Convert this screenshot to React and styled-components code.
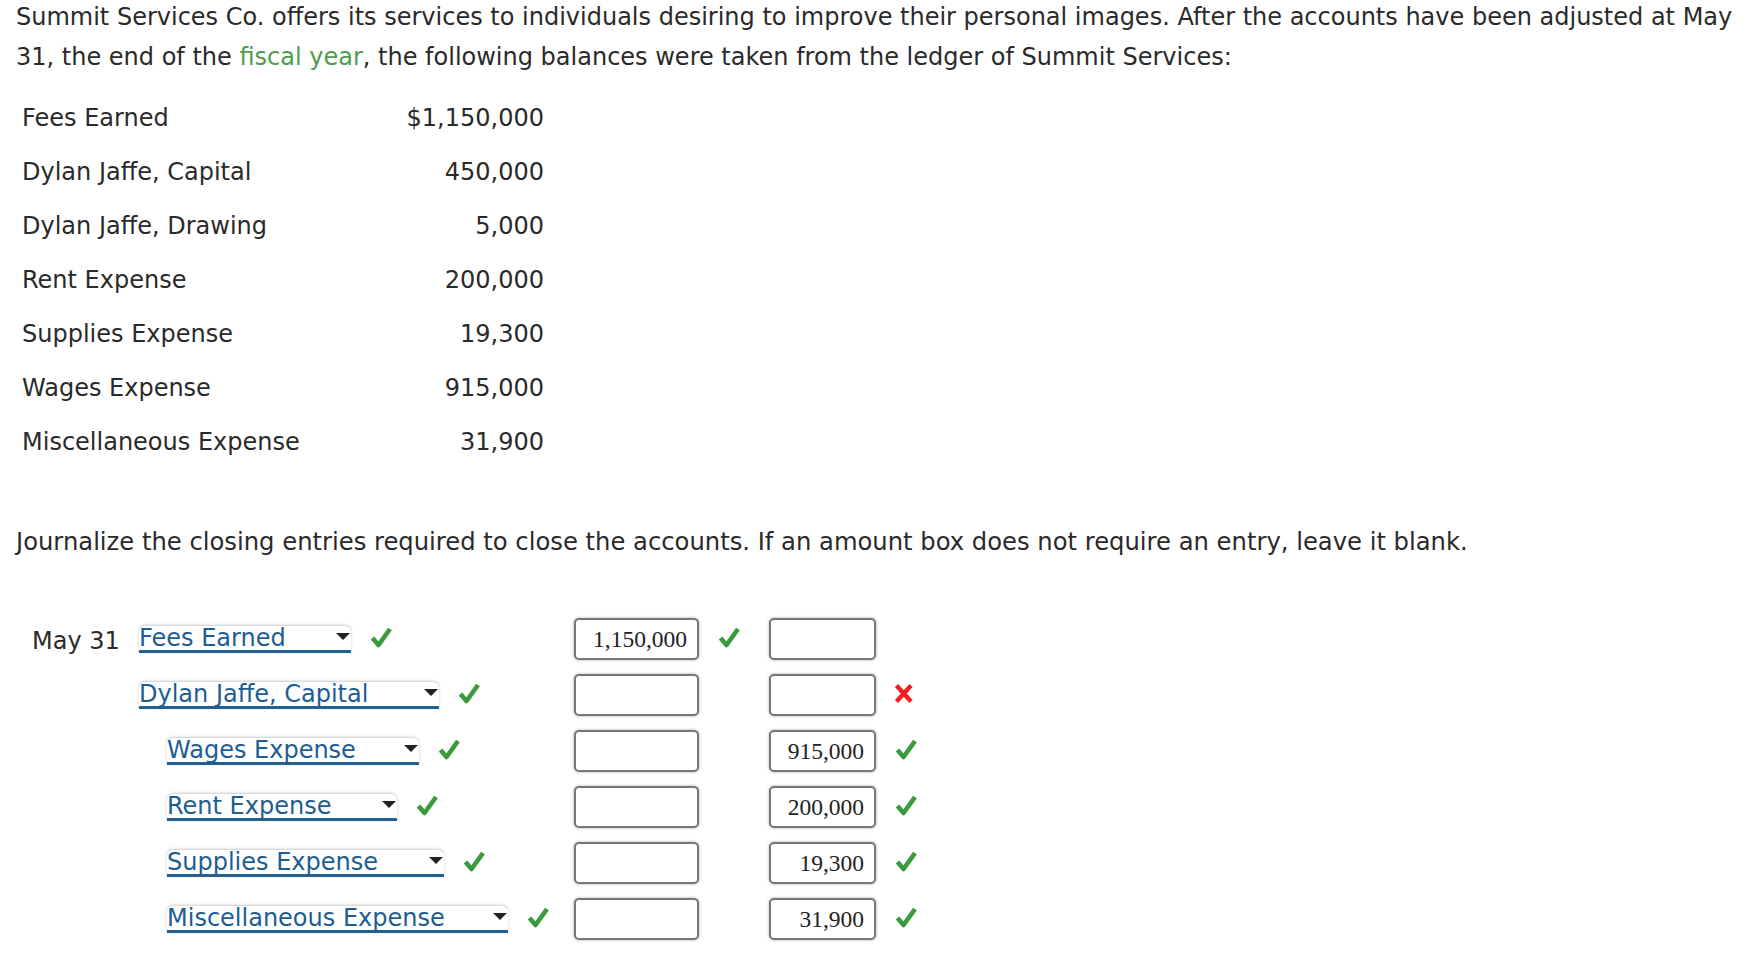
import React from "react";
import styled, { createGlobalStyle } from "styled-components";

const GlobalStyle = createGlobalStyle`
	body {
		margin: 0;
		background: #fff;
		color: #2a2a2a;
		font-family: "DejaVu Sans", Verdana, sans-serif;
	}
`;

const balances = [
	["Fees Earned", "$1,150,000"],
	["Dylan Jaffe, Capital", "450,000"],
	["Dylan Jaffe, Drawing", "5,000"],
	["Rent Expense", "200,000"],
	["Supplies Expense", "19,300"],
	["Wages Expense", "915,000"],
	["Miscellaneous Expense", "31,900"]
];

const entries = [
	{ date: "May 31", account: "Fees Earned", width: 212, mark: "ok", debit: "1,150,000", debitMark: "ok", credit: "" },
	{ account: "Dylan Jaffe, Capital", width: 300, mark: "ok", debit: "", credit: "", creditMark: "wrong" },
	{ account: "Wages Expense", width: 252, indent: true, mark: "ok", debit: "", credit: "915,000", creditMark: "ok" },
	{ account: "Rent Expense", width: 230, indent: true, mark: "ok", debit: "", credit: "200,000", creditMark: "ok" },
	{ account: "Supplies Expense", width: 277, indent: true, mark: "ok", debit: "", credit: "19,300", creditMark: "ok" },
	{ account: "Miscellaneous Expense", width: 341, indent: true, mark: "ok", debit: "", credit: "31,900", creditMark: "ok" }
];

function Check() {
	return (
		<MarkIcon viewBox="0 0 24 24" width="24" height="24">
			<polyline
				points="3.5,13 9.5,20 21,4"
				fill="none"
				stroke="#3b9a3b"
				strokeWidth="4.6"
				strokeLinejoin="round"
				strokeLinecap="butt"
			/>
		</MarkIcon>
	);
}

function Cross() {
	return (
		<MarkIcon viewBox="0 0 20 20" width="20" height="21">
			<path d="M2.5 2 L17 18 M17 2 L2.5 18" stroke="#f41e1e" strokeWidth="4.4" fill="none" />
		</MarkIcon>
	);
}

function Mark({ type }) {
	if (type === "ok") return <Check />;
	if (type === "wrong") return <Cross />;
	return null;
}

export default function App() {
	return (
		<>
			<GlobalStyle />
			<Page>
				<Intro>
					Summit Services Co. offers its services to individuals desiring to improve their personal
					images. After the accounts have been adjusted at May
					<br />
					31, the end of the <Term>fiscal year</Term>, the following balances were taken from the
					ledger of Summit Services:
				</Intro>

				<Balances>
					{balances.map(([label, amount]) => (
						<BalanceRow key={label}>
							<span>{label}</span>
							<Amount>{amount}</Amount>
						</BalanceRow>
					))}
				</Balances>

				<Instruction>
					Journalize the closing entries required to close the accounts. If an amount box does not
					require an entry, leave it blank.
				</Instruction>

				<Journal>
					{entries.map(entry => (
						<EntryRow key={entry.account}>
							<DateCell>{entry.date}</DateCell>
							<AccountCell $indent={entry.indent}>
								<Select $width={entry.width}>
									<span>{entry.account}</span>
									<Arrow />
								</Select>
								<Mark type={entry.mark} />
							</AccountCell>
							<AmountBox readOnly value={entry.debit} />
							<MarkCell>
								<Mark type={entry.debitMark} />
							</MarkCell>
							<AmountBox $narrow readOnly value={entry.credit} />
							<MarkCell>
								<Mark type={entry.creditMark} />
							</MarkCell>
						</EntryRow>
					))}
				</Journal>
			</Page>
		</>
	);
}

const Page = styled.div`
	padding: 0 0 0 16px;
	font-size: 24px;
`;

const Intro = styled.p`
	margin: -3px 0 0;
	line-height: 40px;
	white-space: nowrap;
`;

const Term = styled.span`
	color: #4e9c50;
`;

const Balances = styled.div`
	margin: 14px 0 0 6px;
	width: 522px;
`;

const BalanceRow = styled.div`
	display: grid;
	grid-template-columns: 1fr auto;
	line-height: 54px;
`;

const Amount = styled.span`
	text-align: right;
`;

const Instruction = styled.p`
	margin: 53px 0 0;
	line-height: 40px;
	font-size: 24.25px;
`;

const Journal = styled.div`
	margin-top: 49px;
	padding-left: 16px;
`;

const EntryRow = styled.div`
	display: grid;
	grid-template-columns: 107px 435px 125px 70px 107px 60px;
	align-items: center;
	height: 56px;
`;

const DateCell = styled.div`
	line-height: 24px;
	margin-top: 4px;
	color: #2a2a2a;
`;

const AccountCell = styled.div`
	display: flex;
	align-items: center;
	gap: 18px;
	padding-left: ${p => (p.$indent ? "28px" : "0")};
`;

const Select = styled.div`
	display: flex;
	justify-content: space-between;
	align-items: flex-start;
	width: ${p => p.$width}px;
	box-sizing: border-box;
	height: 27px;
	line-height: 24px;
	color: #1c5d93;
	background: #fff;
	border-bottom: 3px solid #21608f;
	border-radius: 6px 6px 0 0;
	box-shadow: 0 -1px 3px rgba(0, 0, 0, 0.22);
	white-space: nowrap;
`;

const Arrow = styled.i`
	margin: 7px 1px 0 0;
	width: 0;
	height: 0;
	border-left: 7px solid transparent;
	border-right: 7px solid transparent;
	border-top: 7.5px solid #222;
`;

const MarkIcon = styled.svg`
	display: block;
	flex: none;
	margin-top: -4px;
`;

const MarkCell = styled.div`
	display: flex;
	align-items: center;
	padding-left: 18px;
`;

const AmountBox = styled.input`
	box-sizing: border-box;
	width: ${p => (p.$narrow ? "107px" : "125px")};
	height: 42px;
	padding: 0 10px 0 4px;
	border: 2px solid #777;
	border-radius: 5px;
	box-shadow: 0 0 3px rgba(0, 0, 0, 0.35);
	background: #fff;
	color: #222;
	font-family: "Liberation Serif", "Times New Roman", serif;
	font-size: 23.5px;
	text-align: right;
	outline: none;
`;
